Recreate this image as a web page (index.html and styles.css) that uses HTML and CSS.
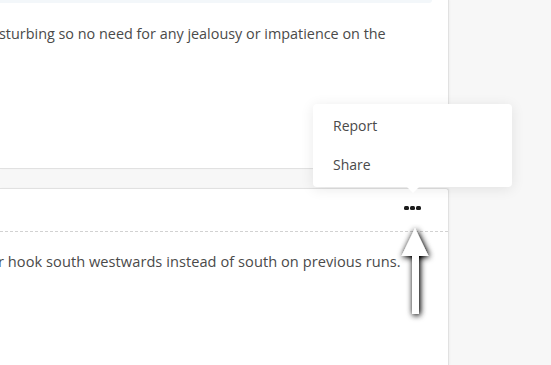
FILE: index.html
```html
<!DOCTYPE html>
<html>
<head>
<meta charset="utf-8">
<link rel="stylesheet" href="styles.css">
</head>
<body>
<div class="feed">
  <div class="card card-top">
    <div class="strip"></div>
    <p class="body-text">sturbing so no need for any jealousy or impatience on the</p>
  </div>
  <div class="card card-bottom">
    <div class="card-head">
      <button class="more" aria-label="More options"><span></span><span></span><span></span></button>
    </div>
    <p class="body-text body-text-2">r hook south westwards instead of south on previous runs.</p>
  </div>
</div>

<div class="menu">
  <div class="menu-item">Report</div>
  <div class="menu-item">Share</div>
</div>

<svg class="pointer" width="40" height="100" viewBox="0 0 40 100">
  <defs>
    <filter id="sh" x="-50%" y="-50%" width="200%" height="200%">
      <feGaussianBlur in="SourceAlpha" stdDeviation="3"/>
      <feOffset dx="0.5" dy="1" result="b"/>
      <feComponentTransfer><feFuncA type="linear" slope="1.25"/></feComponentTransfer>
      <feMerge><feMergeNode/><feMergeNode in="SourceGraphic"/></feMerge>
    </filter>
  </defs>
  <path d="M19 4 L32.5 32 L23 32 L23 90 L16 90 L16 32 L5.5 32 Z" fill="#ffffff" filter="url(#sh)"/>
</svg>
</body>
</html>
```

FILE: styles.css
```css
html, body {
  margin: 0;
  padding: 0;
}
body {
  background: #f7f7f7;
  width: 551px;
  height: 365px;
  overflow: hidden;
  position: relative;
  font-family: "Open Sans", "Noto Sans", sans-serif;
  color: #4a4a4a;
}
.feed {
  width: 449px;
  display: flex;
  flex-direction: column;
  gap: 19px;
}
.card {
  background: #ffffff;
  border: 1px solid #e1e1e1;
  border-left: none;
  box-sizing: border-box;
  box-shadow: 1px 0 2px rgba(0, 0, 0, 0.03);
}
.card-top {
  height: 169px;
  border-top: none;
  border-radius: 0 0 3px 0;
}
.card-bottom {
  height: 177px;
  border-bottom: none;
  border-radius: 0 3px 0 0;
}
.strip {
  width: 432px;
  height: 3px;
  background: #f3f7fa;
  border-radius: 0 0 3px 0;
}
.body-text {
  margin: 21px 0 0 -1px;
  font-size: 14.4px;
  line-height: 20px;
  white-space: nowrap;
}
.card-head {
  height: 42px;
  border-bottom: 1px dashed #d2d2d2;
  display: flex;
  justify-content: flex-end;
  align-items: flex-start;
  padding-right: 27px;
}
.more {
  margin-top: 17px;
  display: flex;
  gap: 1px;
  padding: 0;
  border: none;
  background: none;
}
.more span {
  width: 5px;
  height: 4px;
  border-radius: 1.5px;
  background: #1c1c1c;
}
.body-text-2 {
  margin-top: 19px;
  margin-left: -2px;
  font-size: 14.6px;
  letter-spacing: 0.05px;
}
.menu {
  position: absolute;
  left: 313px;
  top: 104px;
  width: 199px;
  box-sizing: border-box;
  padding: 2px 0 3px;
  background: #ffffff;
  border-radius: 4px;
  box-shadow: 0 2px 14px rgba(0, 0, 0, 0.09);
  font-size: 14px;
  color: #4a4a4a;
}
.menu::after {
  content: "";
  position: absolute;
  left: 94px;
  bottom: -6px;
  width: 0;
  height: 0;
  border-left: 6px solid transparent;
  border-right: 6px solid transparent;
  border-top: 6px solid #ffffff;
}
.menu-item {
  height: 39px;
  line-height: 39px;
  padding-left: 20px;
}
.pointer {
  position: absolute;
  left: 396px;
  top: 224px;
}
```
